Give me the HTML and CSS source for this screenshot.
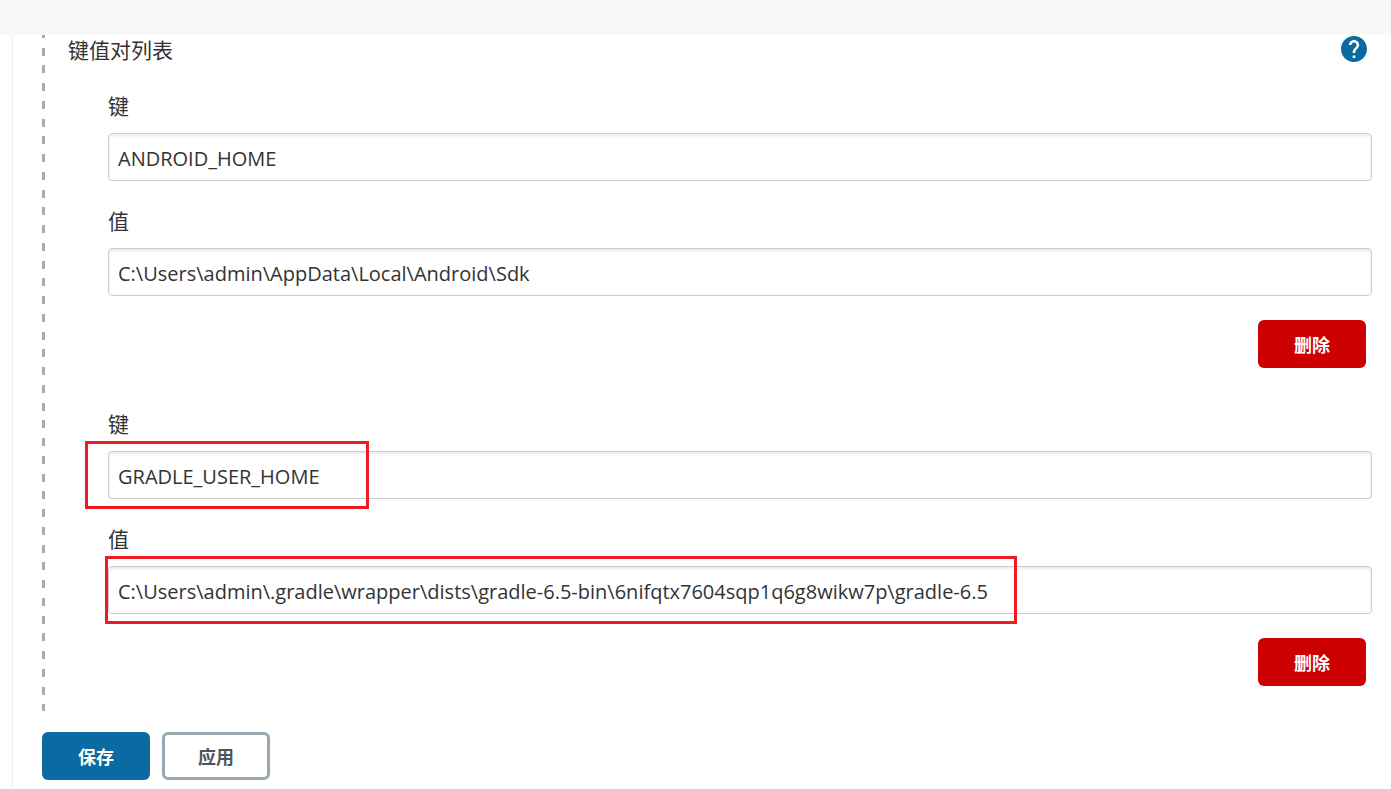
FILE: index.html
```html
<!DOCTYPE html>
<html lang="zh-CN">
<head>
    <meta charset="utf-8">
    <title>键值对列表</title>
    <meta name="viewport" content="width=device-width, initial-scale=1.0">
    <link rel="stylesheet" href="styles.css">
</head>
<body>
    <header class="top-bar"></header>

    <main class="main-panel">
        <form class="config-form">
            <section class="env-section">
                <div class="section-header">
                    <h1 class="section-title">键值对列表</h1>
                    <button type="button" class="help-btn" aria-label="帮助">
                        <svg width="26" height="26" viewBox="2 2 20 20">
                            <path fill="#0b6aa2" d="M12 2C6.48 2 2 6.48 2 12s4.48 10 10 10 10-4.48 10-10S17.52 2 12 2zm1 17h-2v-2h2v2zm2.07-7.75l-.9.92C13.45 12.9 13 13.5 13 15h-2v-.5c0-1.1.45-2.1 1.17-2.83l1.24-1.26c.37-.36.59-.86.59-1.41 0-1.1-.9-2-2-2s-2 .9-2 2H8c0-2.21 1.79-4 4-4s4 1.79 4 4c0 .88-.36 1.68-.93 2.25z"/>
                        </svg>
                    </button>
                </div>

                <div class="pair">
                    <div class="field">
                        <label for="key-1">键</label>
                        <input type="text" id="key-1" value="ANDROID_HOME">
                    </div>
                    <div class="field">
                        <label for="value-1">值</label>
                        <input type="text" id="value-1" value="C:\Users\admin\AppData\Local\Android\Sdk">
                    </div>
                    <div class="pair-actions">
                        <button type="button" class="btn btn-danger">删除</button>
                    </div>
                </div>

                <div class="pair">
                    <div class="field">
                        <label for="key-2">键</label>
                        <div class="input-wrap">
                            <input type="text" id="key-2" value="GRADLE_USER_HOME">
                            <span class="mark mark-key"></span>
                        </div>
                    </div>
                    <div class="field">
                        <label for="value-2">值</label>
                        <div class="input-wrap">
                            <input type="text" id="value-2" value="C:\Users\admin\.gradle\wrapper\dists\gradle-6.5-bin\6nifqtx7604sqp1q6g8wikw7p\gradle-6.5">
                            <span class="mark mark-value"></span>
                        </div>
                    </div>
                    <div class="pair-actions">
                        <button type="button" class="btn btn-danger">删除</button>
                    </div>
                </div>
            </section>

            <div class="form-actions">
                <button type="submit" class="btn btn-primary">保存</button>
                <button type="button" class="btn btn-outline">应用</button>
            </div>
        </form>
    </main>
</body>
</html>
```

FILE: styles.css
```css
* {
    box-sizing: border-box;
}
body {
    display: flex;
    flex-direction: column;
    min-height: 100vh;
    margin: 0;
    background-color: white;
    color: #333;
    font-family: "Open Sans", "Noto Sans CJK SC", sans-serif;
    font-size: 20px;
}
.top-bar {
    height: 35px;
    background-color: #f8f8f8;
}
.main-panel {
    flex: 1;
    margin-left: 12px;
    padding: 0 19px 9px 29px;
    border-left: 1px solid #eaefef;
}
/* dashed guide line on the left */
.env-section {
    padding: 1px 0 25px 26px;
    background-image: linear-gradient(#aaa 3px, transparent 3px 13px, #aaa 13px 21px, transparent 21px 30px, #aaa 30px 38px, transparent 38px 48px, #aaa 48px 56px, transparent 56px 66px, #aaa 66px);
    background-size: 3px 71px;
    background-repeat: repeat-y;
}
.section-header {
    display: flex;
    justify-content: space-between;
    align-items: flex-start;
    margin-bottom: 29px;
    padding-right: 5px;
}
.section-title {
    margin: 0;
    font-size: 21px;
    font-weight: normal;
    line-height: 28px;
}
.help-btn {
    display: flex;
    padding: 0;
    border: none;
    background: none;
    cursor: pointer;
}
.pair {
    display: flex;
    flex-direction: column;
    margin-left: 40px;
}
.pair + .pair {
    margin-top: 43px;
}
.field + .field {
    margin-top: 27px;
}
.field label {
    display: block;
    margin-bottom: 14px;
    font-size: 21px;
    line-height: 26px;
}
.field input {
    display: block;
    width: 100%;
    height: 48px;
    padding: 2px 9px 0;
    border: 1px solid #ccc;
    border-radius: 4px;
    background-color: white;
    box-shadow: inset 0 2px 3px rgba(0, 0, 0, 0.08);
    color: #333;
    font-family: inherit;
    font-size: 20px;
}
.input-wrap {
    position: relative;
}
/* red highlight boxes */
.mark {
    position: absolute;
    top: -10px;
    height: 68px;
    border: 3px solid #ed1c24;
    pointer-events: none;
}
.mark-key {
    left: -23px;
    width: 284px;
}
.mark-value {
    left: -3px;
    width: 912px;
}
.pair-actions {
    display: flex;
    justify-content: flex-end;
    margin-top: 24px;
    padding-right: 6px;
}
.btn {
    width: 108px;
    height: 48px;
    padding: 0;
    border: none;
    border-radius: 6px;
    font-family: inherit;
    font-size: 18px;
    font-weight: bold;
    cursor: pointer;
}
.btn-danger {
    background-color: #c00;
    color: white;
}
.btn-primary {
    background-color: #0b6aa2;
    color: white;
}
.btn-outline {
    border: 3px solid #9aa8b0;
    background-color: white;
    color: #4d545d;
}
.form-actions {
    display: flex;
    gap: 12px;
    margin-top: 21px;
}
```
